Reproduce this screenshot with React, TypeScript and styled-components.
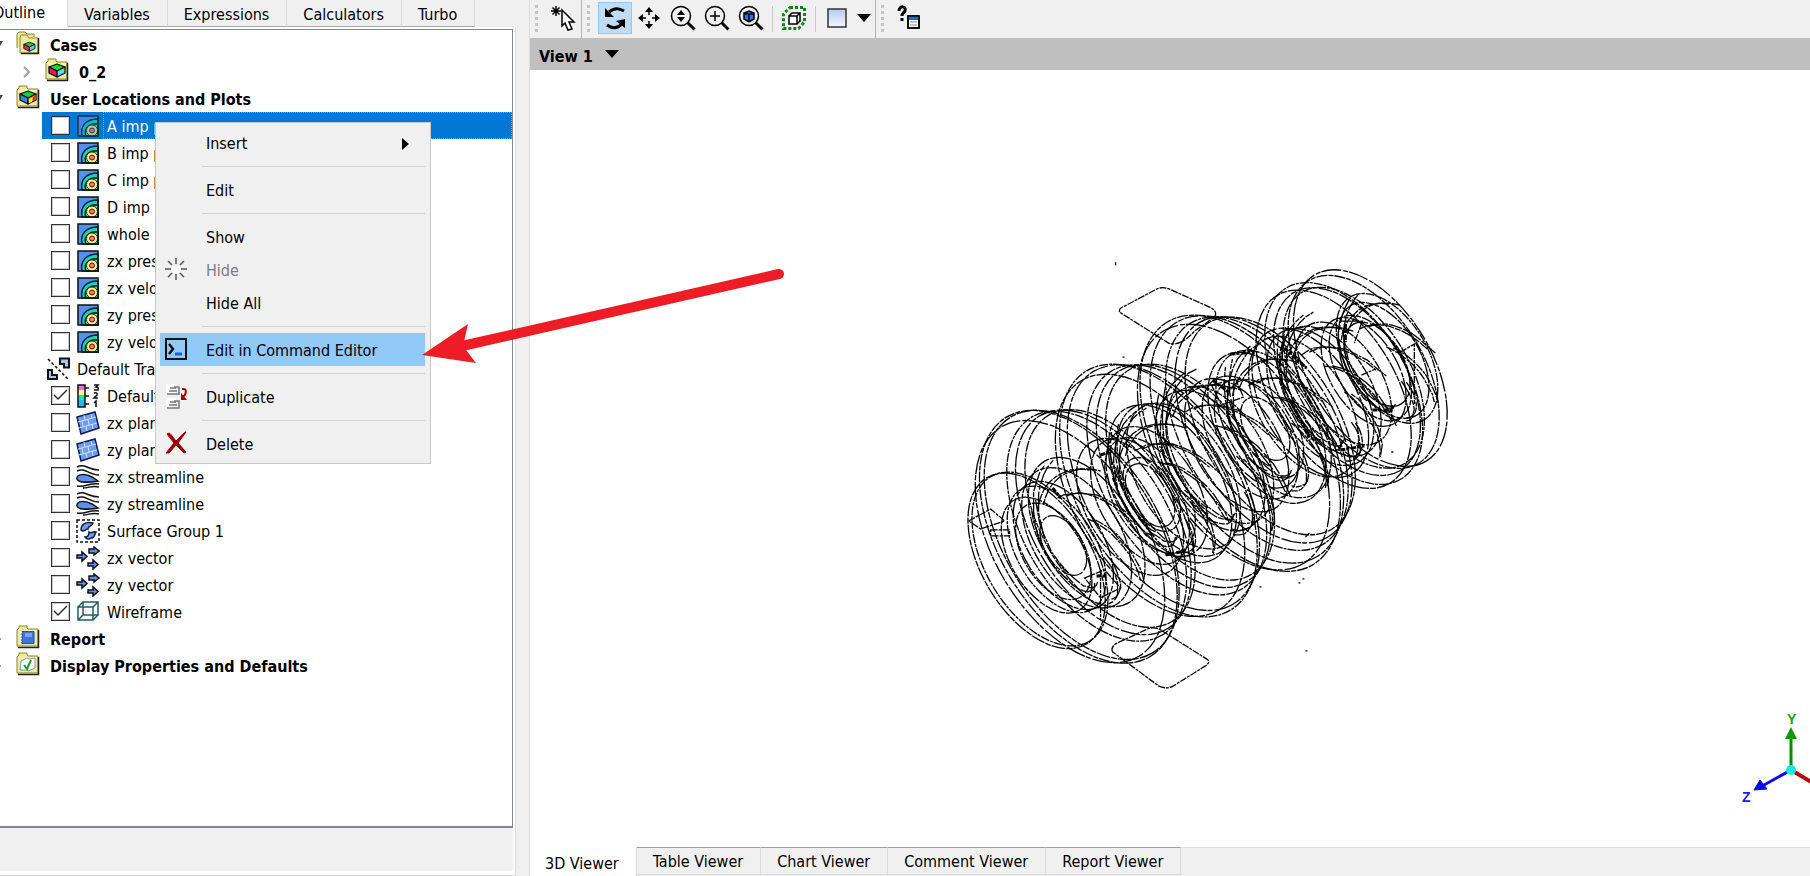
import React, { useState } from "react";
import styled, { createGlobalStyle, css } from "styled-components";

const Global = createGlobalStyle`
  * { box-sizing: border-box; }
  body {
    margin: 0;
    background: #f0f0f0;
    color: #000;
    font-family: "DejaVu Sans Condensed", Tahoma, sans-serif;
    font-size: 16px;
    line-height: 20px;
  }
  button, input { font: inherit; color: inherit; }
`;

/* ---------- page frame ---------- */

const Page = styled.div`
  position: relative;
  display: flex;
  gap: 13px;
  height: 100vh;
  overflow: hidden;
`;

const Sidebar = styled.aside`
  display: flex;
  flex-direction: column;
  flex: 0 0 516px;
  min-width: 0;
`;

const Workspace = styled.main`
  display: flex;
  flex: 1;
  flex-direction: column;
  min-width: 0;
  border-left: 1px solid #dcdcdc;
`;

/* ---------- sidebar tabs ---------- */

const SideTabs = styled.div`
  display: flex;
  align-items: flex-start;
  height: 27px;
  margin-left: -29px;
`;

const SideTab = styled.button<{ $active?: boolean }>`
  height: ${(p) => (p.$active ? 29 : 27)}px;
  padding: ${(p) => (p.$active ? "0 22px 3px" : "4px 17px 0 16px")};
  border: 0;
  border-right: 1px solid #d9d9d9;
  border-bottom: ${(p) => (p.$active ? "0" : "1px solid #a8a8a8")};
  background: ${(p) => (p.$active ? "#fff" : "#f0f0f0")};
`;

const SidePane = styled.div`
  display: flex;
  flex: 1;
  flex-direction: column;
  min-height: 0;
  padding: 2px 2px 4px 0;
  border: solid #dcdcdc;
  border-width: 0 1px 1px 0;
  background: #fff;
`;

const SideFooter = styled.div`
  height: 43px;
  background: #f0f0f0;
`;

/* ---------- tree ---------- */

const Tree = styled.ul`
  flex: 1;
  margin: 0;
  padding: 1px 0 0;
  overflow: hidden;
  border: solid #828790;
  border-width: 1px 1px 2px 0;
  background: #fff;
  list-style: none;
`;

const Branch = styled.li<{ $nested?: boolean }>`
  display: flex;
  align-items: center;
  height: 27px;
  padding-left: ${(p) => (p.$nested ? 17 : 0)}px;
  font-weight: 700;
`;

const BranchIcon = styled.span`
  display: flex;
  padding-bottom: 3px;
`;

const Expander = styled.button<{ $nested?: boolean }>`
  display: flex;
  width: ${(p) => (p.$nested ? 28 : 16)}px;
  height: 20px;
  padding: ${(p) => (p.$nested ? "0 0 0 5px" : "0")};
  align-items: center;
  border: 0;
  background: none;
`;

const BranchLabel = styled.span`
  padding: 2px 0 0 10px;
  white-space: nowrap;
`;

const Leaf = styled.li<{ $selected?: boolean; $plain?: boolean }>`
  display: flex;
  align-items: center;
  height: 27px;
  margin-left: 42px;
  padding-left: ${(p) => (p.$plain ? 4 : 9)}px;
  white-space: nowrap;
  ${(p) =>
    p.$selected &&
    css`
      background: #0078d7;
      color: #fff;
    `}
`;

const Check = styled.input`
  flex: none;
  width: 19px;
  height: 19px;
  margin: 0 6px 0 0;
  appearance: none;
  border: 1px solid #333;
  outline: 1px solid #33333340;
  outline-offset: -2px;
  background: #fff;
`;

const CheckWrap = styled.span`
  position: relative;
  display: flex;
  svg {
    position: absolute;
    top: 0;
    left: 0;
    pointer-events: none;
  }
`;

const LeafLabel = styled.label<{ $selected?: boolean }>`
  flex: 1;
  height: 27px;
  margin-left: 3px;
  padding: 4px 0 0 3px;
  border: 1px ${(p) => (p.$selected ? "dotted #e08a3c" : "solid transparent")};
`;

const Faded = styled.span<{ $on?: boolean }>`
  display: flex;
  flex: none;
  opacity: ${(p) => (p.$on ? 0.7 : 1)};
`;

/* ---------- context menu ---------- */

const Menu = styled.div`
  position: absolute;
  top: 122px;
  left: 155px;
  width: 276px;
  padding: 3px 5px 3px 4px;
  border: 1px solid #c8c8c8;
  background: #f0f0f0;
`;

const MenuItem = styled.button<{ $hot?: boolean }>`
  display: flex;
  align-items: center;
  width: 100%;
  height: 33px;
  padding: 2px 15px 0 4px;
  border: 0;
  background: ${(p) => (p.$hot ? "#91c9f7" : "transparent")};
  text-align: left;
  &:disabled { color: #7d7d7d; }
`;

const MenuIcon = styled.span`
  display: flex;
  flex: none;
  width: 42px;
  height: 30px;
  padding-bottom: 4px;
  align-items: center;
`;

const MenuText = styled.span`
  flex: 1;
`;

const MenuRule = styled.hr`
  height: 1px;
  margin: 7px 0 6px 42px;
  border: 0;
  background: #d4d4d4;
`;

const Pointer = styled.svg`
  position: absolute;
  top: 260px;
  left: 416px;
  pointer-events: none;
`;

/* ---------- toolbar ---------- */

const Toolbar = styled.div`
  display: flex;
  height: 38px;
  background: #f0f0f0;
`;

const ToolGroup = styled.div<{ $last?: boolean }>`
  display: flex;
  align-items: flex-start;
  padding: 2px 1px 0 5px;
  border-right: ${(p) => (p.$last ? "0" : "1px solid #b4b4b4")};
`;

const Grip = styled.span`
  width: 3px;
  height: 28px;
  margin: 3px 8px 0 0;
  background: repeating-linear-gradient(#c4c4c4 0 3px, transparent 3px 6px);
`;

const Tool = styled.button<{ $on?: boolean; $slim?: boolean }>`
  display: flex;
  align-items: center;
  justify-content: center;
  width: ${(p) => (p.$slim ? 20 : 34)}px;
  height: 32px;
  padding: 0;
  border: 1px solid ${(p) => (p.$on ? "#90c8f6" : "transparent")};
  background: ${(p) => (p.$on ? "#c0dcf3" : "transparent")};
`;

const ToolRule = styled.span`
  width: 1px;
  height: 26px;
  margin: 4px 4px 0;
  background: #c8c8c8;
`;

const ViewBar = styled.div`
  display: flex;
  align-items: center;
  gap: 12px;
  height: 32px;
  padding: 6px 9px 0;
  background: #bfbfbf;
  font-weight: 700;
`;

const ViewPick = styled.button`
  display: flex;
  padding: 0 0 7px;
  border: 0;
  background: none;
`;

/* ---------- viewer ---------- */

const Viewer = styled.section`
  position: relative;
  flex: 1;
  min-height: 0;
  background: #fff;
`;

const Scene = styled.svg`
  display: block;
  width: 100%;
  height: 100%;
`;

const Triad = styled.svg`
  position: absolute;
  right: 0;
  bottom: 27px;
`;

const ViewTabs = styled.div`
  display: flex;
  align-items: flex-start;
  height: 29px;
  background: #f0f0f0;
`;

const ViewTab = styled.button<{ $active?: boolean }>`
  height: ${(p) => (p.$active ? 29 : 28)}px;
  padding: ${(p) => (p.$active ? "4px 17px 0 15px" : "2px 17px 0 16px")};
  border: solid #d9d9d9;
  border-width: ${(p) => (p.$active ? "0 1px 0 0" : "1px 1px 1px 0")};
  border-top-color: #a0a0a0;
  background: ${(p) => (p.$active ? "#fff" : "#f0f0f0")};
`;

const TabRest = styled.span`
  flex: 1;
  height: 1px;
  background: #dcdcdc;
`;

/* ---------- tree icons ---------- */

const FolderShape = () => (
  <>
    <path d="M1 21V5l2-2V1h8v2l1 1h10v17H1z" fill="#eee9a0" stroke="#8c8620" />
    <path d="M2 6h19" stroke="#fffbd0" />
    <path d="M22.500 5v17.500H2" fill="none" stroke="#222" strokeWidth="1.500" />
  </>
);

const Cube = ({ a, b, c }: { a: string; b: string; c: string }) => (
  <g stroke="#111" strokeWidth="1.300" strokeLinejoin="round">
    <path d="M4 9l8-3 8 3-8 4z" fill={a} />
    <path d="M4 9l8 4v6l-8-4z" fill={b} />
    <path d="M20 9l-8 4v6l8-4z" fill={c} />
  </g>
);

type IconName =
  | "cases" | "case" | "user" | "report" | "display"
  | "contour" | "transform" | "legend" | "plane" | "stream"
  | "surface" | "vector" | "wire";

const TreeIcon = ({ name }: { name: IconName }) => (
  <svg width="24" height="24" viewBox="0 0 24 24" fill="none">
    {name === "cases" && (
      <>
        <path d="M1 17V3l2-2h6l2 2h7v3" fill="#eee9a0" stroke="#8c8620" />
        <path d="M4 22V7l1-3h6l2 3h9v15z" fill="#eee9a0" stroke="#8c8620" />
        <path d="M22.500 7v15.500H5" stroke="#222" strokeWidth="1.500" />
        <g transform="translate(5 7) scale(.7)"><Cube a="#10d030" b="#f0206a" c="#50d0f8" /></g>
      </>
    )}
    {name === "case" && (<><FolderShape /><Cube a="#10e020" b="#f01060" c="#60d8ff" /></>)}
    {name === "user" && (
      <><FolderShape /><Cube a="#10d040" b="#1890f0" c="#f0a020" />
        <path d="M13 14l3-1v4l-3 1z" fill="#f8f020" /><path d="M17 12l3-2v5l-3 1z" fill="#e83020" /></>
    )}
    {name === "report" && (
      <><FolderShape /><path d="M6 6.500h12v12H6z" fill="#3f74d8" stroke="#2850a8" />
        <path d="M9 9h7M9 11h7" stroke="#b8d0ff" /><path d="M5 7v12" stroke="#fff" strokeWidth="2" strokeDasharray="1 2" /></>
    )}
    {name === "display" && (
      <><FolderShape /><path d="M5 9l6-3 2 1 6-1v10l-7 3-2-1-6 0z" fill="#fff" stroke="#78a0b8" />
        <path d="M8 13l3 4 4-9" stroke="#18a028" strokeWidth="2" /></>
    )}
    {name === "contour" && (
      <>
        <path d="M2 2h20v20H2z" fill="#5490ee" />
        <path d="M6 22C4 12 10 5 22 5v17z" fill="#10d8c0" stroke="#123" strokeWidth="1.500" />
        <path d="M10 22c-3-7 3-13 12-12v12z" fill="#18f0a8" stroke="#123" strokeWidth="1.500" />
        <circle cx="16" cy="16.500" r="5.500" fill="#fff27a" stroke="#430" />
        <circle cx="16" cy="16.500" r="2.500" fill="#f47a8a" stroke="#511" />
        <path d="M2 2h20v20H2z" stroke="#111" strokeWidth="1.500" />
      </>
    )}
    {name === "transform" && (
      <>
        <path d="M14 1.500h9v9h-5V7h-4z" fill="#a9c0ff" stroke="#111" strokeWidth="2" />
        <path d="M2 13h4v5h5v4H2z" fill="#a9c0ff" stroke="#111" strokeWidth="2" />
        <path d="M2 2l20 20" stroke="#111" strokeWidth="1.500" strokeDasharray="3 2" />
      </>
    )}
    {name === "legend" && (
      <>
        <path d="M2 1h7v6H2z" fill="#ff6cc8" /><path d="M2 6h7v5H2z" fill="#fff5a8" />
        <path d="M2 11h7v5H2z" fill="#20e8a0" /><path d="M2 16h7v7H2z" fill="#20b8ff" />
        <path d="M2 1h7v22H2zM9 4h4M9 12h4M9 20h4" stroke="#111" strokeWidth="1.500" />
        <path d="M18 1h4l-2 2q3 0 2 3h-4M18 9q4-1 3 2l-3 3h4M18 19l2-2v6" stroke="#111" strokeWidth="1.500" />
      </>
    )}
    {name === "plane" && (
      <>
        <path d="M1 6l18-5 4 16-18 6z" fill="#6f9cf4" stroke="#111c50" strokeWidth="1.500" />
        <path d="M2 11l18-5M3 17l18-5M8 4l1 5M15 3l1 4M6 10l1 5M12 8l1 6M10 15l1 5M16 13l1 5" stroke="#cfe0ff" />
      </>
    )}
    {name === "stream" && (
      <>
        <path d="M1 14c-1-5 8-6 15-2l6 4c-7 1-19 3-21-2z" fill="#5a90f4" stroke="#111" strokeWidth="1.500" />
        <path d="M1 2c8-4 11 3 22 3M1 6c8-4 12 4 22 4M1 21c8 2 13-4 22-2M7 23c6 0 9-3 16-1" stroke="#111" strokeWidth="1.500" />
      </>
    )}
    {name === "surface" && (
      <>
        <path d="M1 1h22v22H1z" stroke="#111" strokeWidth="1.500" strokeDasharray="3 2" />
        <path d="M5 11c0-5 4-9 12-7-1 4-5 2-5 6-3 0-4 4-7 1z" fill="#6f9cf4" stroke="#123" strokeWidth="1.500" />
        <path d="M9 18c3 0 4-2 4-5 3 2 4-1 7 0-2 3-1 6-5 6-2 2-5 1-6-1z" fill="#6f9cf4" stroke="#123" strokeWidth="1.500" />
      </>
    )}
    {name === "vector" && (
      <g fill="#5a90f4" stroke="#111" strokeWidth="1.500">
        <path d="M1 9h5V6l5 4.500L6 15v-3H1z" />
        <path d="M13 3h5V1l5 4-5 4V7h-5z" />
        <path d="M12 17h5v-3l5 4.500-5 4.500v-3h-5z" />
      </g>
    )}
    {name === "wire" && (
      <path d="M2 7h15v13H2zM7 2h15v13H7zM2 7l5-5M17 7l5-5M2 20l5-5M17 20l5-5" stroke="#1f5e6e" strokeWidth="1.500" />
    )}
  </svg>
);

const Tick = () => (
  <svg width="19" height="19" viewBox="0 0 19 19" fill="none">
    <path d="M3 9l4 4 9-9" stroke="#333" strokeWidth="1.500" />
  </svg>
);

/* ---------- menu icons ---------- */

const HideIcon = () => (
  <svg width="24" height="24" viewBox="0 0 24 24" stroke="#555" strokeWidth="1.500">
    <circle cx="12" cy="12" r="4" fill="#fff" stroke="none" />
    <path d="M12 1v6M12 17v6M1 12h6M17 12h6M4 4l4 4M16 16l4 4M20 4l-4 4M8 16l-4 4" />
  </svg>
);
const CommandIcon = () => (
  <svg width="24" height="24" viewBox="0 0 24 24" fill="none">
    <path d="M2 2h20v20H2z" stroke="#111" strokeWidth="2" />
    <path d="M5 7l4 5-4 5" stroke="#111" strokeWidth="2.500" />
    <path d="M11 17h7" stroke="#2060d0" strokeWidth="3" />
  </svg>
);
const DuplicateIcon = () => (
  <svg width="24" height="26" viewBox="0 0 24 26" fill="none">
    <path d="M2 1h10v9H2zM2 15h10v9H2z" fill="#fff" />
    <path d="M10 4h5v7H3M10 18h5v7H3M6 5h6M5 8h8M6 19h6M5 22h8" stroke="#777" strokeWidth="1.500" />
    <path d="M18 6c6-1 4 6 1 8" stroke="#a00" strokeWidth="2" />
    <path d="M17 10v7h6z" fill="#a00" />
  </svg>
);
const DeleteIcon = () => (
  <svg width="24" height="24" viewBox="0 0 24 24">
    <path d="M3 3c2-2 4 0 5 2l4 5 9-9h1l-8 11 8 9-2 1-8-8-7 8H2l8-10z" fill="#a00000" stroke="#a00000" />
  </svg>
);

/* ---------- toolbar icons ---------- */

const Svg24 = ({ children }: { children: React.ReactNode }) => (
  <svg width="26" height="26" viewBox="0 0 26 26" fill="none" stroke="#000" strokeWidth="1.500">{children}</svg>
);
const SelectIcon = () => (
  <Svg24>
    <path d="M6 1v10M1 6h10M2.500 2.500l7 7M9.500 2.500l-7 7" />
    <path d="M12 5v16l3-3 3 7 4-1-3-7h5z" fill="#fff" />
  </Svg24>
);
const RotateIcon = () => (
  <Svg24>
    <path d="M7 7q7-6 15-1M5 20q8 6 15-1" strokeWidth="3" />
    <path d="M3 3v9h9zM23 14v9l-9-7z" fill="#000" stroke="none" />
  </Svg24>
);
const MoveIcon = () => (
  <Svg24>
    <path d="M13 3v7M13 16v7M3 13h7M16 13h7" />
    <path d="M13 2l4 5H9zM13 24l4-5H9zM2 13l5-4v8zM24 13l-5-4v8z" fill="#000" stroke="none" />
  </Svg24>
);
const Lens = ({ children }: { children: React.ReactNode }) => (
  <Svg24>
    <circle cx="11" cy="11" r="9.500" />
    <path d="M17.500 17.500l7 7" strokeWidth="3" />
    {children}
  </Svg24>
);
const FitIcon = () => (
  <svg width="26" height="26" viewBox="0 0 26 26" fill="none">
    <path d="M9 2.500h14.500V17l-6 6.500H2.500V9z" stroke="#0a8a0a" strokeWidth="3" strokeDasharray="3 2" />
    <path d="M8 11h8v8H8zM8 11l3-3h8v8l-3 3M16 11l3-3" fill="#fff" stroke="#000" strokeWidth="1.500" />
  </svg>
);
const SwatchIcon = () => (
  <svg width="20" height="20" viewBox="0 0 20 20">
    <defs>
      <linearGradient id="swatch" x1="0" y1="0" x2="0" y2="1">
        <stop offset="0" stopColor="#b8c8f0" /><stop offset="1" stopColor="#f4f7ff" />
      </linearGradient>
    </defs>
    <path d="M1 1h18v18H1z" fill="url(#swatch)" stroke="#333" strokeWidth="1.500" />
  </svg>
);
const Caret = () => (
  <svg width="14" height="8" viewBox="0 0 14 8"><path d="M0 0h14L7 8z" /></svg>
);
const HelpIcon = () => (
  <Svg24>
    <path d="M3 6c0-6 8-5 6 0-1 2-3 2-3 5" strokeWidth="3" />
    <path d="M4.500 13h3v3h-3z" fill="#000" stroke="none" />
    <path d="M12 11h11v12H12z" fill="#fff" />
    <path d="M12 11h11v4H12z" fill="#1070d0" stroke="none" />
    <path d="M14 17h7M14 20h7" stroke="#888" strokeWidth="1" />
    <path d="M12 11h11v12H12z" />
  </Svg24>
);

/* ---------- pump wireframe ---------- */

type Ring = [t: number, scale: number];

/** Centre of a ring that sits at t (0 = inlet, 1 = outlet) on the shaft. */
const centre = (t: number) => ({ x: 1036 + 334 * t, y: 561 - 193 * t });

/** A point on a ring; the angle is measured round the shaft. */
const onRing = (t: number, s: number, deg: number) => {
  const c = centre(t);
  const a = (deg * Math.PI) / 180;
  const r = (59 * Math.PI) / 180;
  const u = 97 * s * Math.cos(a);
  const v = 55 * s * Math.sin(a);
  return [c.x + u * Math.cos(r) - v * Math.sin(r), c.y + u * Math.sin(r) + v * Math.cos(r)];
};

const casing: Ring[] = [
  [0, 1], [0.01, 0.99],
  [0.1, 1.38], [0.125, 1.44], [0.135, 1.42], [0.18, 1.31], [0.2, 1.28], [0.22, 1.24],
  [0.34, 1.38], [0.365, 1.44], [0.38, 1.4], [0.42, 1.31], [0.44, 1.27], [0.46, 1.23],
  [0.59, 1.4], [0.61, 1.46], [0.63, 1.41], [0.66, 1.33], [0.68, 1.29], [0.7, 1.24],
  [0.89, 1.13], [0.92, 1.15], [1, 1.12], [0.98, 1.1], [0.93, 1.07], [0.95, 1.03],
];

const wheels: Ring[] = [
  [0.03, 0.66], [0.06, 0.72], [0.08, 0.73], [0.12, 0.8], [0.15, 0.85], [0.05, 0.55], [0.08, 0.34],
  [0.28, 0.78], [0.31, 0.72], [0.34, 0.66], [0.36, 0.74], [0.42, 0.87], [0.4, 0.9], [0.44, 0.83], [0.34, 0.36], [0.345, 0.42],
  [0.52, 0.8], [0.55, 0.78], [0.6, 0.76], [0.64, 0.7], [0.69, 0.86], [0.71, 0.84], [0.66, 0.62], [0.685, 0.56], [0.685, 0.36],
  [0.8, 0.8], [0.82, 0.85], [0.85, 0.78], [0.88, 0.74], [0.92, 0.7], [0.98, 0.62], [1, 0.6], [1.04, 0.66], [1.05, 0.74], [1.02, 0.48],
];

const hubs = [
  { t: 0.1, inner: 0.5, outer: 0.82, n: 7 },
  { t: 0.34, inner: 0.5, outer: 0.85, n: 9 },
  { t: 0.5, inner: 0.6, outer: 0.95, n: 9 },
  { t: 0.68, inner: 0.5, outer: 0.84, n: 9 },
  { t: 0.84, inner: 0.5, outer: 0.85, n: 9 },
  { t: 1, inner: 0.45, outer: 0.72, n: 7 },
];

const dashes = ["14 1 6 1", "9 1 3 1", "20 2 5 1", "5 1 11 1"];

const blade = (t: number, inner: number, outer: number, start: number) => {
  const steps = 9;
  let d = "";
  for (let i = 0; i <= steps; i++) {
    const k = i / steps;
    const [x, y] = onRing(t + 0.05 * k, inner + (outer - inner) * k, start + 75 * k);
    d += `${i ? "L" : "M"}${Math.round(x)} ${Math.round(y)}`;
  }
  return d;
};

const RingLine = ({ ring, i }: { ring: Ring; i: number }) => {
  const c = centre(ring[0]);
  return (
    <ellipse
      cx={c.x} cy={c.y} rx={97 * ring[1]} ry={55 * ring[1]}
      transform={`rotate(59 ${c.x} ${c.y})`}
      strokeDasharray={dashes[i % dashes.length]}
    />
  );
};

const Wireframe = () => (
  <Scene viewBox="529 70 1281 777" role="img" aria-label="Pump wireframe">
    <g fill="none" stroke="#000" strokeWidth="1.300">
      {casing.map((r, i) => <RingLine key={`c${i}`} ring={r} i={i} />)}
      {wheels.map((r, i) => <RingLine key={`w${i}`} ring={r} i={i} />)}
      {hubs.map((h, k) =>
        Array.from({ length: h.n }, (_, i) => (
          <g key={`${k}-${i}`} strokeDasharray={dashes[i % dashes.length]}>
            <path d={blade(h.t, h.inner, h.outer, (360 / h.n) * i)} />
            <path d={blade(h.t + 0.015, h.inner, h.outer, (360 / h.n) * i + 6)} />
          </g>
        ))
      )}
      <g strokeDasharray="7 1 3 1">
        <path d="M1119 312q-1-4 5-6l32-17q6-3 13 0l40 18q9 4 5 10l-20 14q-14 16-26 12z" />
        <path d="M1112 652q-2-4 3-8l30-14q8-4 15 0l46 29q5 3-1 7l-32 20q-7 4-15 0z" />
        <path d="M968 521l22-12 14 12-24 8zM990 530h19v6h-19zM1084 578l20-8 16 18-20 10zM1100 570v50" />
        <path d="M1211 385l24-6 8 18-22 8zM1285 330l24-4M1340 321h22l-8 22M1361 375l14-6M1400 352l14-8v60" />
      </g>
      <path d="M1115 262v3M1122 357h2M1305 537l4-4M1298 583h2M1302 579h2M1259 587h2M1391 452h2M1305 651h2" />
    </g>
    <path
      d="M1212 380l16 12M1284 348l22 20M1345 324v18M1372 410h20M1096 576h10M1052 488l8 10M1100 455l12-4M1230 354l24-2M1290 400l20 40M1165 555l20-4M1340 450l24-4"
      fill="none" stroke="#000" strokeWidth="3" strokeDasharray="5 1 3 2"
    />
  </Scene>
);

const AxisTriad = () => (
  <Triad width="80" height="110" viewBox="0 0 80 110" aria-hidden="true">
    <path d="M61 60V28" stroke="#0a8a0a" strokeWidth="3" />
    <path d="M61 17l6 12H55z" fill="#0a9a0a" />
    <path d="M61 60L34 75" stroke="#0808f0" strokeWidth="3" />
    <path d="M24 80l6-10 7 9z" fill="#0808f0" stroke="#0808f0" />
    <path d="M61 60l22 13" stroke="#b80808" strokeWidth="4" />
    <circle cx="61" cy="60" r="5" fill="#18e8e0" />
    <text x="57" y="14" fill="#18a818" fontSize="14" fontWeight="700" fontFamily="Liberation Sans, sans-serif">Y</text>
    <text x="12" y="92" fill="#2020e8" fontSize="14" fontWeight="700" fontFamily="Liberation Sans, sans-serif">Z</text>
  </Triad>
);

/* ---------- data ---------- */

type LeafData = { label: string; icon: IconName; checked?: boolean; plain?: boolean };

const leaves: LeafData[] = [
  { label: "A imp p", icon: "contour" },
  { label: "B imp p", icon: "contour" },
  { label: "C imp p", icon: "contour" },
  { label: "D imp p", icon: "contour" },
  { label: "whole p", icon: "contour" },
  { label: "zx pres", icon: "contour" },
  { label: "zx velo", icon: "contour" },
  { label: "zy pres", icon: "contour" },
  { label: "zy velo", icon: "contour" },
  { label: "Default Tra", icon: "transform", plain: true },
  { label: "Default", icon: "legend", checked: true },
  { label: "zx plan", icon: "plane" },
  { label: "zy plan", icon: "plane" },
  { label: "zx streamline", icon: "stream" },
  { label: "zy streamline", icon: "stream" },
  { label: "Surface Group 1", icon: "surface" },
  { label: "zx vector", icon: "vector" },
  { label: "zy vector", icon: "vector" },
  { label: "Wireframe", icon: "wire", checked: true },
];

const LeafRow = ({ item, index }: { item: LeafData; index: number }) => {
  const [on, setOn] = useState(!!item.checked);
  const selected = index === 0;
  const id = `leaf-${index}`;
  return (
    <Leaf $selected={selected} $plain={item.plain}>
      {!item.plain && (
        <CheckWrap>
          <Check id={id} type="checkbox" checked={on} onChange={() => setOn(!on)} />
          {on && <Tick />}
        </CheckWrap>
      )}
      <Faded $on={selected}><TreeIcon name={item.icon} /></Faded>
      <LeafLabel as={item.plain ? "span" : "label"} htmlFor={item.plain ? undefined : id} $selected={selected}>
        {item.label}
      </LeafLabel>
    </Leaf>
  );
};

const BranchRow = ({ label, icon, state, nested }: { label: string; icon: IconName; state: "open" | "closed"; nested?: boolean }) => (
  <Branch $nested={nested}>
    <Expander $nested={nested} aria-label={`Toggle ${label}`}>
      <svg width="10" height="12" viewBox="0 0 10 12" fill="none">
        {nested && <path d="M2 1l5 5-5 5" stroke="#a0a0a0" strokeWidth="2" />}
        {!nested && state === "open" && <path d="M0 2h3L0 7z" fill="#444" />}
        {!nested && state === "closed" && <path d="M0 5l1 1-1 1" stroke="#a0a0a0" />}
      </svg>
    </Expander>
    <BranchIcon><TreeIcon name={icon} /></BranchIcon>
    <BranchLabel>{label}</BranchLabel>
  </Branch>
);

export default function App() {
  return (
    <>
      <Global />
      <Page>
        <Sidebar>
          <SideTabs role="tablist">
            <SideTab role="tab" $active>Outline</SideTab>
            <SideTab role="tab">Variables</SideTab>
            <SideTab role="tab">Expressions</SideTab>
            <SideTab role="tab">Calculators</SideTab>
            <SideTab role="tab">Turbo</SideTab>
          </SideTabs>
          <SidePane>
            <Tree>
              <BranchRow label="Cases" icon="cases" state="open" />
              <BranchRow label="0_2" icon="case" state="closed" nested />
              <BranchRow label="User Locations and Plots" icon="user" state="open" />
              {leaves.map((l, i) => <LeafRow key={l.label} item={l} index={i} />)}
              <BranchRow label="Report" icon="report" state="closed" />
              <BranchRow label="Display Properties and Defaults" icon="display" state="closed" />
            </Tree>
            <SideFooter />
          </SidePane>
        </Sidebar>

        <Workspace>
          <Toolbar>
            <ToolGroup>
              <Grip />
              <Tool aria-label="Select"><SelectIcon /></Tool>
            </ToolGroup>
            <ToolGroup>
              <Grip />
              <Tool $on aria-label="Rotate"><RotateIcon /></Tool>
              <Tool aria-label="Pan"><MoveIcon /></Tool>
              <Tool aria-label="Zoom">
                <Lens><path d="M11 5l4 5H7zM11 17l4-5H7z" fill="#000" stroke="none" /></Lens>
              </Tool>
              <Tool aria-label="Zoom box"><Lens><path d="M11 6v10M6 11h10" /></Lens></Tool>
              <Tool aria-label="Fit view">
                <Lens><path d="M6 8l5-2 5 2v6l-5 3-5-3z" fill="#3a70e8" /><path d="M7 9h8M11 9v7" /></Lens>
              </Tool>
              <ToolRule />
              <Tool aria-label="Highlight"><FitIcon /></Tool>
              <ToolRule />
              <Tool aria-label="Viewport layout"><SwatchIcon /></Tool>
              <Tool $slim aria-label="Layout options"><Caret /></Tool>
            </ToolGroup>
            <ToolGroup $last>
              <Grip />
              <Tool aria-label="Help"><HelpIcon /></Tool>
            </ToolGroup>
          </Toolbar>
          <ViewBar>
            View 1
            <ViewPick aria-label="Choose view"><Caret /></ViewPick>
          </ViewBar>
          <Viewer>
            <Wireframe />
            <AxisTriad />
          </Viewer>
          <ViewTabs role="tablist">
            <ViewTab role="tab" $active>3D Viewer</ViewTab>
            <ViewTab role="tab">Table Viewer</ViewTab>
            <ViewTab role="tab">Chart Viewer</ViewTab>
            <ViewTab role="tab">Comment Viewer</ViewTab>
            <ViewTab role="tab">Report Viewer</ViewTab>
            <TabRest />
          </ViewTabs>
        </Workspace>

        <Menu role="menu">
          <MenuItem role="menuitem"><MenuIcon /><MenuText>Insert</MenuText>
            <svg width="8" height="12" viewBox="0 0 8 12"><path d="M0 0l7 6-7 6z" /></svg>
          </MenuItem>
          <MenuRule />
          <MenuItem role="menuitem"><MenuIcon /><MenuText>Edit</MenuText></MenuItem>
          <MenuRule />
          <MenuItem role="menuitem"><MenuIcon /><MenuText>Show</MenuText></MenuItem>
          <MenuItem role="menuitem" disabled><MenuIcon><HideIcon /></MenuIcon><MenuText>Hide</MenuText></MenuItem>
          <MenuItem role="menuitem"><MenuIcon /><MenuText>Hide All</MenuText></MenuItem>
          <MenuRule />
          <MenuItem role="menuitem" $hot><MenuIcon><CommandIcon /></MenuIcon><MenuText>Edit in Command Editor</MenuText></MenuItem>
          <MenuRule />
          <MenuItem role="menuitem"><MenuIcon><DuplicateIcon /></MenuIcon><MenuText>Duplicate</MenuText></MenuItem>
          <MenuRule />
          <MenuItem role="menuitem"><MenuIcon><DeleteIcon /></MenuIcon><MenuText>Delete</MenuText></MenuItem>
        </Menu>

        <Pointer width="380" height="120" viewBox="416 260 380 120" aria-hidden="true">
          <path d="M779 274L462 346" stroke="#ee1c24" strokeWidth="10" strokeLinecap="round" />
          <path d="M422 355l46-31-5 22 13 17z" fill="#ee1c24" />
        </Pointer>
      </Page>
    </>
  );
}
